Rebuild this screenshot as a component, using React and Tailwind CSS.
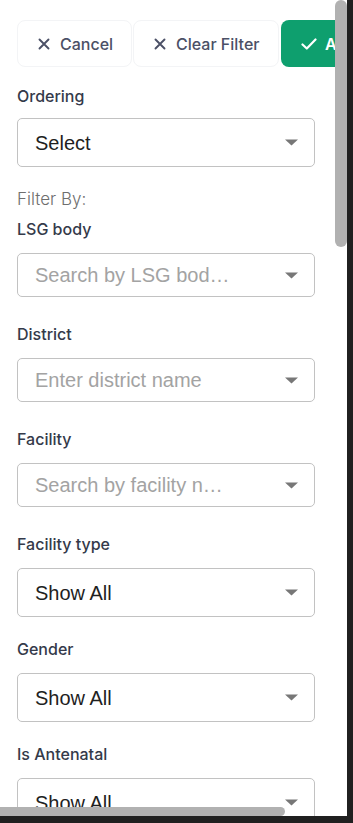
import React from 'react';

const Caret = () => (
  <svg width="13" height="7" viewBox="0 0 13 7" className="shrink-0">
    <path d="M0 0.5 H13 L6.5 6.5 Z" fill="#777777" />
  </svg>
);

const XIcon = () => (
  <svg width="12" height="12" viewBox="0 0 12 12" className="shrink-0">
    <path d="M1.5 1.5 L10.5 10.5 M10.5 1.5 L1.5 10.5" stroke="currentColor" strokeWidth="1.9" strokeLinecap="round" />
  </svg>
);

const Check = () => (
  <svg width="16" height="12" viewBox="0 0 16 12" className="shrink-0">
    <path d="M1.5 6.5 L5.8 10.5 L14.5 1.5" stroke="white" strokeWidth="2.2" fill="none" strokeLinecap="round" strokeLinejoin="round" />
  </svg>
);

const fields = [
  { label: 'LSG body', placeholder: 'Search by LSG body name', tall: false, mt: 'mt-[6px]' },
  { label: 'District', placeholder: 'Enter district name', tall: false, mt: 'mt-[25px]' },
  { label: 'Facility', placeholder: 'Search by facility name', tall: false, mt: 'mt-[25px]' },
  { label: 'Facility type', value: 'Show All', tall: true, mt: 'mt-[25px]' },
  { label: 'Gender', value: 'Show All', tall: true, mt: 'mt-5' },
  { label: 'Is Antenatal', value: 'Show All', tall: true, mt: 'mt-5' }
];

const SelectBox = ({ value, placeholder, tall }) => (
  <div
    className={`flex items-center w-[298px] ${tall ? 'h-[49px]' : 'h-[44px]'} border border-[#c2c2c2] rounded-[5px] pl-[17px] pr-4 bg-white`}
    style={{ fontFamily: '"Liberation Sans", Arial, sans-serif' }}
  >
    <span className={`w-[196px] truncate text-[20px] leading-6 ${value ? 'text-[#1f1f1f]' : 'text-[#a3a3a3]'}`}>
      {value || placeholder}
    </span>
    <span className="ml-auto flex">
      <Caret />
    </span>
  </div>
);

const Label = ({ children, className = '' }) => (
  <div className={`text-base leading-6 font-medium text-[#343a4a] ${className}`}>{children}</div>
);

export default function App() {
  return (
    <div className="w-[353px] h-[823px] bg-[#202020]" style={{ fontFamily: 'Inter, "Noto Sans", sans-serif' }}>
      <div className="relative w-[347px] h-[816px] bg-white overflow-hidden">
        <div className="w-[335px] h-full overflow-hidden pl-[17px] pt-5">
          {/* Actions */}
          <div className="flex w-max">
            <button className="flex items-center gap-[10px] w-[115px] h-[47px] px-5 border border-gray-100 rounded-lg bg-white text-base font-medium text-[#4b5066] whitespace-nowrap">
              <XIcon />
              Cancel
            </button>
            <button className="ml-[1px] flex items-center gap-[10px] w-[146px] h-[47px] pl-5 pr-3 border border-gray-100 rounded-lg bg-white text-base font-medium text-[#4b5066] whitespace-nowrap">
              <XIcon />
              Clear Filter
            </button>
            <button className="ml-[2px] flex items-center gap-[8px] w-[110px] h-[47px] px-5 rounded-lg bg-[#0e9f6e] text-base font-semibold text-white whitespace-nowrap">
              <Check />
              Apply
            </button>
          </div>

          <Label className="mt-[17px]">Ordering</Label>
          <div className="mt-[10px]">
            <SelectBox value="Select" tall />
          </div>

          <div className="mt-5 text-[17px] leading-6 font-light text-[#6e6e6e]">Filter By:</div>

          {fields.map((f, i) => (
            <div key={i} className={f.mt}>
              <Label>{f.label}</Label>
              <div className="mt-3">
                <SelectBox value={f.value} placeholder={f.placeholder} tall={f.tall} />
              </div>
            </div>
          ))}
        </div>

        {/* scrollbars */}
        <div className="absolute left-[335px] top-0 w-3 h-[247px] rounded-full bg-[#b1b1b1]" />
        <div className="absolute left-0 top-[807px] w-[285px] h-[9px] rounded-r-full bg-[#b1b1b1]" />
      </div>
    </div>
  );
}
